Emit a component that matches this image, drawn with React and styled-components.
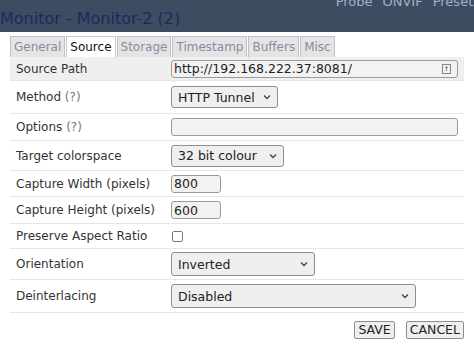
import React from 'react';
import styled, { createGlobalStyle } from 'styled-components';

const Global = createGlobalStyle`
  html, body { margin:0; padding:0; background:#fff; }
  body { font-family:"DejaVu Sans", Verdana, sans-serif; font-size:12px; color:#333; }
`;

const Header = styled.div`
  height:32px;
  background:#3c4d61;
  display:flex;
  flex-direction:column;
  overflow:hidden;
`;
const Links = styled.div`
  display:flex;
  justify-content:flex-end;
  gap:10px;
  margin-top:-5px;
  margin-right:-6px;
  line-height:14px;
  font-size:13px;
  color:#9fb1cb;
`;
const Title = styled.div`
  font-size:16px;
  line-height:19px;
  color:#1b2a5e;
`;

const Tabs = styled.div`
  display:flex;
  gap:1px;
  padding:4px 0 0 10px;
`;
const Tab = styled.div`
  padding:2px 3px;
  font-size:12px;
  line-height:16px;
  border:1px solid ${p => p.active ? '#c8c8c8' : '#bfbfc6'};
  border-bottom:none;
  background:${p => p.active ? '#fff' : '#e4e4e6'};
  color:${p => p.active ? '#111' : '#8a8c9c'};
`;

const Table = styled.div`
  margin:0 10px;
  width:454px;
`;
const Row = styled.div`
  display:grid;
  grid-template-columns:161px 1fr;
  align-items:center;
  height:${p => p.h}px;
  background:${p => p.shade ? '#efefef' : '#fff'};
  border-bottom:1px solid #e6e6e6;
  box-sizing:border-box;
`;
const Label = styled.div`
  padding-left:6px;
  color:#333;
  white-space:nowrap;
  span { color:#777; }
`;
const Cell = styled.div`
  display:flex;
  align-items:center;
`;
const TextBox = styled.div`
  position:relative;
  width:${p => p.w}px;
  height:18px;
  box-sizing:border-box;
  border:1px solid #9a9a9a;
  border-radius:3px;
  background:#f2f2f2;
  padding:0 4px 0 2px;
  display:flex;
  align-items:center;
  color:#222;
  font-size:12.5px;
`;
const Key = styled.svg`
  position:absolute;
  right:6px;
  top:3px;
`;
const Select = styled.div`
  width:${p => p.w}px;
  height:${p => p.hh || 22}px;
  box-sizing:border-box;
  border:1px solid #8e8e8e;
  border-radius:3px;
  background:#efefef;
  display:flex;
  align-items:center;
  justify-content:space-between;
  padding:0 6px;
  color:#222;
  font-size:12.5px;
`;
const Check = styled.div`
  width:9px;
  height:9px;
  margin-left:1px;
  border:1px solid #777;
  border-radius:2px;
  background:#fff;
`;
const Buttons = styled.div`
  width:464px;
  display:flex;
  justify-content:flex-end;
  gap:11px;
  margin-top:8px;
`;
const Button = styled.div`
  height:18px;
  box-sizing:border-box;
  padding:0 3px;
  border:1px solid #8e8e8e;
  border-radius:2px;
  background:#efefef;
  color:#222;
  font-size:12.5px;
  line-height:16px;
`;

const Chevron = () => (
  <svg width="8" height="6" viewBox="0 0 8 6">
    <path d="M1 1.5 L4 4.5 L7 1.5" fill="none" stroke="#444" strokeWidth="1.3" />
  </svg>
);

const Dropdown = ({ w, hh, children }) => (
  <Select w={w} hh={hh}>
    <span>{children}</span>
    <Chevron />
  </Select>
);

const tabs = ['General', 'Source', 'Storage', 'Timestamp', 'Buffers', 'Misc'];

export default function App() {
  return (
    <>
      <Global />
      <Header>
        <Links><span>Probe</span><span>ONVIF</span><span>Presets</span></Links>
        <Title>Monitor - Monitor-2 (2)</Title>
      </Header>
      <Tabs>
        {tabs.map(t => <Tab key={t} active={t === 'Source'}>{t}</Tab>)}
      </Tabs>
      <Table>
        <Row h={24} shade>
          <Label>Source Path</Label>
          <Cell>
            <TextBox w={287}>
              http://192.168.222.37:8081/
              <Key width="9" height="10" viewBox="0 0 9 10">
                <rect x="0.5" y="0.5" width="8" height="9" fill="none" stroke="#888" />
                <path d="M4.5 2.5 V7 M3 4 L4.5 2.5 L6 4" fill="none" stroke="#888" />
              </Key>
            </TextBox>
          </Cell>
        </Row>
        <Row h={33}>
          <Label>Method <span>(?)</span></Label>
          <Cell><Dropdown w={107}>HTTP Tunnel</Dropdown></Cell>
        </Row>
        <Row h={27}>
          <Label>Options <span>(?)</span></Label>
          <Cell><TextBox w={287} /></Cell>
        </Row>
        <Row h={30}>
          <Label>Target colorspace</Label>
          <Cell><Dropdown w={113}>32 bit colour</Dropdown></Cell>
        </Row>
        <Row h={26}>
          <Label>Capture Width (pixels)</Label>
          <Cell><TextBox w={50}>800</TextBox></Cell>
        </Row>
        <Row h={27}>
          <Label>Capture Height (pixels)</Label>
          <Cell><TextBox w={50}>600</TextBox></Cell>
        </Row>
        <Row h={25}>
          <Label>Preserve Aspect Ratio</Label>
          <Cell><Check /></Cell>
        </Row>
        <Row h={31}>
          <Label>Orientation</Label>
          <Cell><Dropdown w={144} hh={24}>Inverted</Dropdown></Cell>
        </Row>
        <Row h={33}>
          <Label>Deinterlacing</Label>
          <Cell><Dropdown w={245} hh={24}>Disabled</Dropdown></Cell>
        </Row>
      </Table>
      <Buttons>
        <Button>SAVE</Button>
        <Button>CANCEL</Button>
      </Buttons>
    </>
  );
}
